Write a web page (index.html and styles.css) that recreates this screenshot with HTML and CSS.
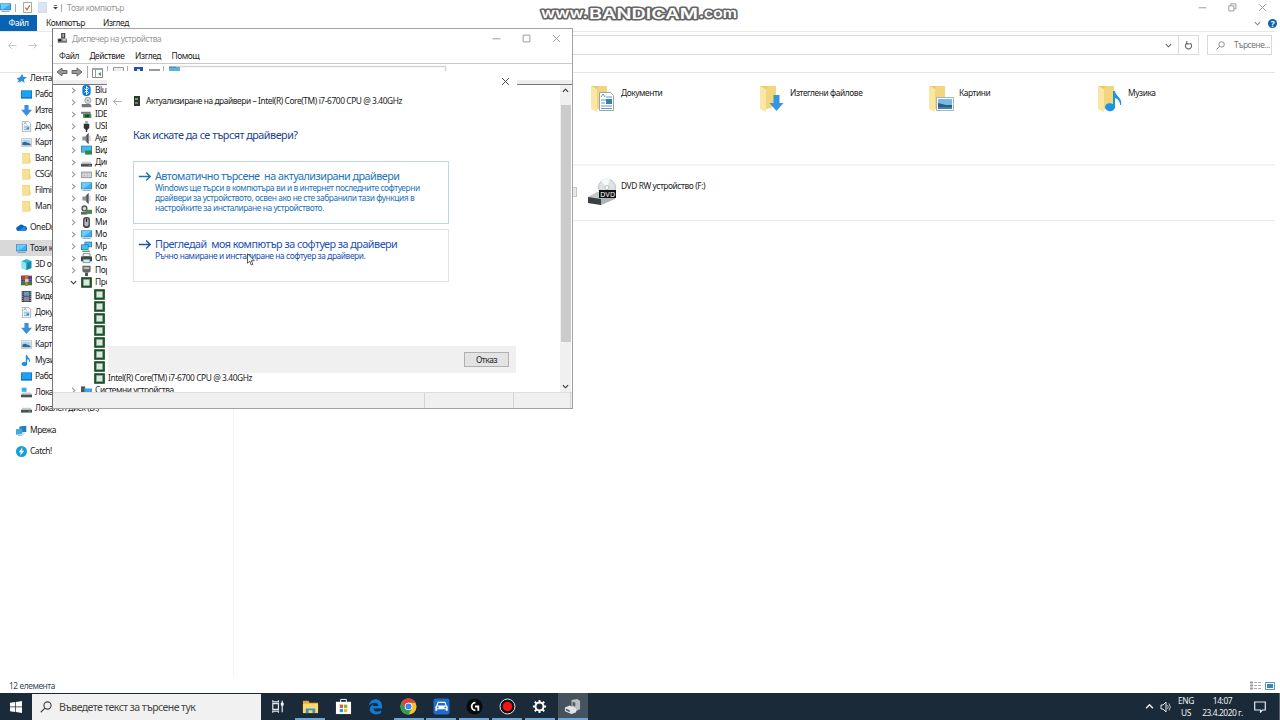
FILE: index.html
```html
<!DOCTYPE html>
<html lang="bg">
<head>
    <meta charset="UTF-8">
    <meta name="viewport" content="width=device-width, initial-scale=1.0">
    <title>Този компютър</title>
    <link rel="stylesheet" href="styles.css">
</head>
<body>

    <svg class="sprite" width="0" height="0">
        <symbol id="pc" viewBox="0 0 16 16"><path d="M0 2h16v10H0z" fill="#2b7fb8"/><path d="M1 3h14v8H1z" fill="#36b0f2"/><path d="M1 3h14L4 11H1z" fill="#6ccbfa"/><path d="M2 13h12v1H2z" fill="#6b7f8c"/></symbol>
        <symbol id="desk" viewBox="0 0 16 16"><path d="M0 2h16v12H0z" fill="#0a6fc2"/><path d="M1 3h14v9H1z" fill="#1ba1f5"/></symbol>
        <symbol id="star" viewBox="0 0 16 16"><path d="M9 1l1.500 4.500L16 6l-4.400 3.500L12.500 14 8.500 11.500 5 14l0-2-4 3 3-4.500L1 7.500 6 6z" fill="#2b8ddb"/></symbol>
        <symbol id="down" viewBox="0 0 16 16"><path d="M5 0h6v7h5l-8 9-8-9h5z" fill="#3b8ede"/></symbol>
        <symbol id="doc" viewBox="0 0 16 16"><path d="M2 .5h9l3 3v12H2z" fill="#fff" stroke="#8b9299"/><path d="M4 5l2-3 2 3M4 7.500h8M4 10h3M4 12.500h8" stroke="#3d8cc4" fill="none"/><path d="M8 9h4v3H8z" fill="#2a8fc0"/></symbol>
        <symbol id="pic" viewBox="0 0 16 16"><path d="M.5 2.500h15v11H.5z" fill="#fff" stroke="#9aa5ad"/><path d="M2 4h12v8H2z" fill="#a8d4ef"/><path d="M2 8l4-1 8 3v2H2z" fill="#34668c"/></symbol>
        <symbol id="folder" viewBox="0 0 16 16"><path d="M2 0h11v15H2z" fill="#edcf72"/><path d="M2 1h10v14H2z" fill="#f9e097"/><path d="M12 8h2v7H2v-1h10z" fill="#f1d379"/></symbol>
        <symbol id="cloud" viewBox="0 0 16 16"><path d="M4 13a3.500 3.500 0 0 1-.5-7A5 5 0 0 1 12 6a3.500 3.500 0 0 1 1 7z" fill="#0b64bd"/><path d="M4 13l7-6a3.400 3.400 0 0 1 2 6z" fill="#1d8be0"/></symbol>
        <symbol id="cube" viewBox="0 0 16 16"><path d="M8 0l7 3v10l-7 3-7-3V3z" fill="#29b5cf"/><path d="M1 3l7 3v10l-7-3z" fill="#91e2ee"/><path d="M8 6l7-3v10l-7 3z" fill="#168ba8"/></symbol>
        <symbol id="rar" viewBox="0 0 16 16"><path d="M0 1h16v5H0z" fill="#7d2f83"/><path d="M0 6h16v4H0z" fill="#3451a4"/><path d="M0 10h16v5H0z" fill="#377c3e"/><path d="M1 1h5v5H1z" fill="#c23a3a"/><path d="M6 0h4v16H6z" fill="#c47c32"/><path d="M6 6h5v4H6z" fill="#e8d9a0"/></symbol>
        <symbol id="film" viewBox="0 0 16 16"><path d="M1 0h14v16H1z" fill="#343b45"/><path d="M4 1h8v6H4z" fill="#6799cb"/><path d="M4 8h8v7H4z" fill="#8a8794"/><path d="M2.500 1v14M13.500 1v14" stroke="#eee" stroke-dasharray="1.500 1.500"/></symbol>
        <symbol id="note" viewBox="0 0 16 16"><path d="M7 0h2c0 4 5 4 4 10h-1c0-3-1-3.500-3-4v7a4 3 0 1 1-2-2.500z" fill="#1d8fe0"/></symbol>
        <symbol id="disk" viewBox="0 0 16 16"><path d="M2 7h12l2 4H0z" fill="#c9cdd1"/><path d="M0 10h16v4H0z" fill="#4c5155"/><path d="M11 12h3" stroke="#7ed36b"/></symbol>
        <symbol id="osdisk" viewBox="0 0 16 16"><path d="M1 1h7v6H1z" fill="#35aee9"/><path d="M2 8h12l2 3H0z" fill="#c9cdd1"/><path d="M0 11h16v4H0z" fill="#4c5155"/></symbol>
        <symbol id="net" viewBox="0 0 16 16"><path d="M5 2l10-1v9L5 11z" fill="#2b7cb0"/><path d="M0 6l9-1v8l-9 1z" fill="#43a7df"/><path d="M3 15h6l3-3" stroke="#5a8db0" fill="none"/></symbol>
        <symbol id="monitors" viewBox="0 0 16 16"><path d="M5 1h11v8H5z" fill="#1f77a8"/><path d="M6 2h9v6H6z" fill="#4dbcf0"/><path d="M0 5h11v8H0z" fill="#1f77a8"/><path d="M1 6h9v6H1z" fill="#4dbcf0"/><path d="M2 14h11v2H2z" fill="#3da558"/></symbol>
        <symbol id="bolt" viewBox="0 0 16 16"><circle cx="8" cy="8" r="8" fill="#149fda"/><path d="M9 2L4 9h3l-1 5 6-7H9z" fill="#fff"/></symbol>
        <symbol id="bt" viewBox="0 0 16 16"><rect x="2" width="12" height="16" rx="5" fill="#0a7be0"/><path d="M5 5l6 6-3 3V2l3 3-6 6" stroke="#fff" fill="none" stroke-width="1.300"/></symbol>
        <symbol id="optic" viewBox="0 0 16 16"><circle cx="10" cy="5" r="4.500" fill="#d7dadc" stroke="#888"/><circle cx="10" cy="5" r="1" fill="#666"/><path d="M1 10h12l2 2v3H1z" fill="#777"/></symbol>
        <symbol id="card" viewBox="0 0 16 16"><path d="M0 4h14v3H0z" fill="#777"/><path d="M3 7h12v6H3z" fill="#3f8f4d"/><path d="M6 8h6v4H6z" fill="#27452c"/></symbol>
        <symbol id="usb" viewBox="0 0 16 16"><path d="M6 0h4v4H6z" fill="#aaa"/><path d="M4 4h8v6l-3 3v3H7v-3l-3-3z" fill="#333"/></symbol>
        <symbol id="snd" viewBox="0 0 16 16"><path d="M2 5h4l5-5v16l-5-5H2z" fill="#8d9297"/><path d="M8 3l3-3v16l-3-3z" fill="#555"/><path d="M13 4v8" stroke="#999"/></symbol>
        <symbol id="gpu" viewBox="0 0 16 16"><path d="M0 1h16v10H0z" fill="#207daf"/><path d="M1 2h14v8H1z" fill="#49b6ee"/><path d="M6 8h10v6H6z" fill="#37844a"/></symbol>
        <symbol id="kbd" viewBox="0 0 16 16"><path d="M.5 4.500h15v8H.5z" fill="#e6e8ea" stroke="#656a70"/><path d="M2 7h12M2 10h12" stroke="#777" stroke-dasharray="1.500 .8"/></symbol>
        <symbol id="ctl" viewBox="0 0 16 16"><circle cx="5" cy="5" r="3.500" fill="#ddd" stroke="#555" stroke-width="2"/><path d="M0 10h9v4H0z" fill="#666"/><path d="M7 7h9v6H7z" fill="#48884f"/></symbol>
        <symbol id="mouse" viewBox="0 0 16 16"><rect x="3" y="0" width="10" height="16" rx="4" fill="#45484c"/><rect x="5" y="1.500" width="6" height="12" rx="3" fill="#b5b9bd"/><path d="M8 2v5" stroke="#222" stroke-width="2"/></symbol>
        <symbol id="print" viewBox="0 0 16 16"><path d="M3 1h10v4H3z" fill="#fff" stroke="#555"/><path d="M0 5h16v7H0z" fill="#444"/><path d="M3 9h10v5H3z" fill="#cfeaec" stroke="#38818b"/></symbol>
        <symbol id="port" viewBox="0 0 16 16"><path d="M2 1h12v8l-2 2H4L2 9z" fill="#666"/><path d="M4 3h8v3H4z" fill="#bbb"/><path d="M6 11h4v5H6z" fill="#444"/></symbol>
        <symbol id="cpu" viewBox="0 0 16 16"><path d="M1 1h14v14H1z" fill="#5d9b6c"/><path d="M1.500 1.500h13v13h-13z" fill="none" stroke="#1f4c2e" stroke-width="2.600"/><path d="M4 4h8v8H4z" fill="#dfe6e1"/></symbol>
        <symbol id="sys" viewBox="0 0 16 16"><path d="M0 2h6v12H0z" fill="#50565b"/><path d="M5 5h11v9H5z" fill="#3da5df"/></symbol>
        <symbol id="devmgr" viewBox="0 0 16 16"><path d="M6 0h6v8H6z" fill="#444"/><path d="M8 1h2v5H8z" fill="#bbb"/><path d="M1 8h13l1 6H1z" fill="#777"/><path d="M2 9h4v3H2z" fill="#222"/><path d="M8 10h5" stroke="#ddd" stroke-width="2"/></symbol>
        <symbol id="arrow" viewBox="0 0 16 16"><path d="M1 8h14M10 3l5 5-5 5" fill="none" stroke="currentColor" stroke-width="1.700"/></symbol>
        <symbol id="arrow-l" viewBox="0 0 16 16"><path d="M15 8H1M7 2L1 8l6 6" fill="none" stroke="currentColor" stroke-width="1.700"/></symbol>
        <symbol id="chev" viewBox="0 0 16 16"><path d="M2 5l6 6 6-6" fill="none" stroke="currentColor" stroke-width="2.600"/></symbol>
        <symbol id="min" viewBox="0 0 16 16"><path d="M1 8.500h14" stroke="currentColor" stroke-width="1.700"/></symbol>
        <symbol id="max" viewBox="0 0 16 16"><path d="M2 2h12v12H2z" fill="none" stroke="currentColor" stroke-width="1.700"/></symbol>
        <symbol id="restore" viewBox="0 0 16 16"><path d="M1.500 5h9v9h-9zM5 5V1.500h9v9h-3" fill="none" stroke="currentColor" stroke-width="1.700"/></symbol>
        <symbol id="close" viewBox="0 0 16 16"><path d="M2 2l12 12M14 2L2 14" stroke="currentColor" stroke-width="1.600"/></symbol>
        <symbol id="search" viewBox="0 0 16 16"><circle cx="10" cy="6" r="4.800" fill="none" stroke="currentColor" stroke-width="1.500"/><path d="M6.500 9.500L1 15" stroke="currentColor" stroke-width="1.500"/></symbol>
        <symbol id="bigfolder" viewBox="0 0 18 28"><path d="M5 1h12v20L5 25z" fill="#f3d67b"/><path d="M1 1l6 3v23l-6-3z" fill="#fae6a5"/><path d="M1 1h7l-1 3z" fill="#e9c867"/></symbol>
    </svg>

    <div class="explorer">
        <div class="ex-title">
            <svg class="i11"><use href="#pc"/></svg>
            <span class="bar"></span>
            <svg class="qa" viewBox="0 0 10 12"><path d="M.5.500h9v11h-9z" fill="#fff" stroke="#999"/><path d="M2.500 6l2 2.500 3-5" stroke="#d2542b" fill="none" stroke-width="1.300"/></svg>
            <svg class="qa" viewBox="0 0 10 12"><path d="M.5.500h9v11h-9z" fill="#d9e5f3" stroke="#cfdae6"/></svg>
            <svg class="tiny" viewBox="0 0 6 6"><path d="M1 .5h4" stroke="#444"/><path d="M0 2.500h6l-3 3z" fill="#444"/></svg>
            <span class="bar"></span>
            <span class="ex-name">Този компютър</span>
            <div class="controls">
                <svg class="i9"><use href="#min"/></svg>
                <svg class="i9"><use href="#restore"/></svg>
                <svg class="i9"><use href="#close"/></svg>
            </div>
        </div>
        <div class="ex-tabs">
            <span class="tab file">Файл</span>
            <span class="tab t2">Компютър</span>
            <span class="tab t3">Изглед</span>
            <div class="tab-right">
                <svg class="i7"><use href="#chev"/></svg>
                <span class="help">?</span>
            </div>
        </div>
        <div class="ex-address">
            <div class="nav-btns">
                <svg class="i9"><use href="#arrow-l"/></svg>
                <svg class="i9"><use href="#arrow"/></svg>
                <svg class="i5"><use href="#chev"/></svg>
            </div>
            <div class="address-box">
                <svg class="i7"><use href="#chev"/></svg>
                <span class="refresh"><svg class="i9" viewBox="0 0 16 16"><path d="M5 4a5.500 5.500 0 1 0 6 0M5 0v5h5" fill="none" stroke="#666" stroke-width="2"/></svg></span>
            </div>
            <div class="search-box"><svg class="i9"><use href="#search"/></svg><span>Търсене...</span></div>
        </div>
        <div class="ex-body">
            <div class="sidebar">
                <div class="nav"><svg class="i11"><use href="#star"/></svg>Лента за бърз</div>
                <div class="nav sub"><svg class="i11"><use href="#desk"/></svg>Работен плот</div>
                <div class="nav sub"><svg class="i11"><use href="#down"/></svg>Изтеглени</div>
                <div class="nav sub"><svg class="i11"><use href="#doc"/></svg>Документи</div>
                <div class="nav sub"><svg class="i11"><use href="#pic"/></svg>Картини</div>
                <div class="nav sub"><svg class="i11"><use href="#folder"/></svg>Bandicam</div>
                <div class="nav sub"><svg class="i11"><use href="#folder"/></svg>CSGO</div>
                <div class="nav sub"><svg class="i11"><use href="#folder"/></svg>Filmi</div>
                <div class="nav sub"><svg class="i11"><use href="#folder"/></svg>Mania</div>
                <div class="nav gap"><svg class="i11"><use href="#cloud"/></svg>OneDrive</div>
                <div class="nav gap selected"><svg class="i11"><use href="#pc"/></svg>Този компютър</div>
                <div class="nav sub"><svg class="i11"><use href="#cube"/></svg>3D обекти</div>
                <div class="nav sub"><svg class="i11"><use href="#rar"/></svg>CSGO</div>
                <div class="nav sub"><svg class="i11"><use href="#film"/></svg>Видеоклипове</div>
                <div class="nav sub"><svg class="i11"><use href="#doc"/></svg>Документи</div>
                <div class="nav sub"><svg class="i11"><use href="#down"/></svg>Изтеглени</div>
                <div class="nav sub"><svg class="i11"><use href="#pic"/></svg>Картини</div>
                <div class="nav sub"><svg class="i11"><use href="#note"/></svg>Музика</div>
                <div class="nav sub"><svg class="i11"><use href="#desk"/></svg>Работен плот</div>
                <div class="nav sub"><svg class="i11"><use href="#osdisk"/></svg>Локален диск</div>
                <div class="nav sub"><svg class="i11"><use href="#disk"/></svg>Локален диск (D:)</div>
                <div class="nav gap"><svg class="i11"><use href="#net"/></svg>Мрежа</div>
                <div class="nav gap"><svg class="i11"><use href="#bolt"/></svg>Catch!</div>
            </div>
            <div class="main">
                <div class="tiles folders">
                    <div class="tile first">
                        <svg class="tile-icon" viewBox="0 0 28 28"><use href="#bigfolder" width="18" height="28"/><path d="M9.500 7.500h11l3 3v15h-14z" fill="#fff" stroke="#9ba5ad"/><path d="M11 12l2-3 2 3M16 12h6M11 15h5M11 18h4M11 21h11M11 23.500h11" stroke="#5b9dcc" fill="none"/><path d="M16 14h6v5h-6z" fill="#3a80ad"/></svg>
                        <span>Документи</span>
                    </div>
                    <div class="tile">
                        <svg class="tile-icon" viewBox="0 0 28 28"><use href="#bigfolder" width="18" height="28"/><path d="M14.500 10h6v8h4l-7 8-7-8h4z" fill="#3595e4"/></svg>
                        <span>Изтеглени файлове</span>
                    </div>
                    <div class="tile">
                        <svg class="tile-icon" viewBox="0 0 28 28"><use href="#bigfolder" width="18" height="28"/><path d="M8.500 12.500h17v13h-17z" fill="#fff" stroke="#a5b3bd"/><path d="M10 14h14v10H10z" fill="#77b8ed"/><path d="M10 18l4 1 4 1h6v4H10z" fill="#315f72"/><path d="M10 22h14v2H10z" fill="#3b82b4"/></svg>
                        <span>Картини</span>
                    </div>
                    <div class="tile">
                        <svg class="tile-icon" viewBox="0 0 28 28"><use href="#bigfolder" width="18" height="28"/><path d="M16 6h2c0 5 8 7 6 14h-1c0-4-2-6-5-7v9a5 4 0 1 1-2-3z" fill="#1b94e6"/></svg>
                        <span>Музика</span>
                    </div>
                </div>
                <div class="tiles drives">
                    <div class="drive"><div class="usage"></div></div>
                    <div class="tile">
                        <svg class="tile-icon dvd" viewBox="0 0 30 28"><path d="M1 19l9-5h18v6l-14 7-13-2z" fill="#c4c7ca"/><path d="M1 19l13 2v6l-13-2z" fill="#3b3f43"/><path d="M14 21l14-4v4l-14 6z" fill="#aeb2b6"/><circle cx="20" cy="9.500" r="8.500" fill="#dde2e5" stroke="#b9bfc3"/><path d="M20 9.500L14 3a9 9 0 0 1 9-2z" fill="#f7f9fa"/><circle cx="20" cy="9.500" r="2" fill="#fff" stroke="#b5b9bd"/><path d="M12 12h17v8H12z" fill="#111"/><text x="13.200" y="18.700" font-size="7" fill="#fff" textLength="14.500">DVD</text></svg>
                        <span>DVD RW устройство (F:)</span>
                    </div>
                </div>
            </div>
        </div>
        <div class="ex-status">
            <span>12 елемента</span>
            <div class="views">
                <svg width="11" height="9" viewBox="0 0 11 9"><path d="M0 1.500h3M0 4.500h3M0 7.500h3" stroke="#999" stroke-width="2"/><path d="M4 1.500h3M8 1.500h3M4 4.500h3M8 4.500h3M4 7.500h3M8 7.500h3" stroke="#aaa"/></svg>
                <svg width="10" height="8" viewBox="0 0 10 8"><path d="M.5.500h9v7h-9z" fill="#fff" stroke="#4e9ac2"/><path d="M2 2h6v4H2z" fill="#3f83ae"/></svg>
            </div>
        </div>
    </div>

    <div class="devmgr">
        <div class="dm-title">
            <svg class="i11"><use href="#devmgr"/></svg>
            <span>Диспечер на устройства</span>
            <div class="controls">
                <svg class="i9"><use href="#min"/></svg>
                <svg class="i9"><use href="#max"/></svg>
                <svg class="i9"><use href="#close"/></svg>
            </div>
        </div>
        <div class="dm-menu">
            <span>Файл</span><span>Действие</span><span>Изглед</span><span>Помощ</span>
        </div>
        <div class="dm-toolbar">
            <svg width="398" height="19" viewBox="0 0 398 19">
                <path d="M3 8l5-4v2.500h5v3H8V12z" fill="#999" stroke="#666"/>
                <path d="M28 8l-5-4v2.500h-5v3h5V12z" fill="#999" stroke="#666"/>
                <path d="M33.500 2v12M53.500 2v12M73.500 2v5M109.500 2v5" stroke="#aaa"/>
                <path d="M38.500 4.500h10v9h-10z" fill="#fff" stroke="#888"/><path d="M38 4h11v2H38z" fill="#9aa7b0"/><path d="M41.500 6v7" stroke="#999"/><path d="M47 8v4l-3-2z" fill="#3fa34d"/>
                <path d="M59.500 3.500h10v5h-10z" fill="#eee" stroke="#999"/>
                <path d="M80 3h9v5h-9z" fill="#2450ab"/><path d="M83 5h3v3h-3z" fill="#dce5fa"/>
                <path d="M95 5h11v2H95z" fill="#999"/>
                <path d="M115 3h11v5h-11z" fill="#5bb2e4"/><path d="M115 3h11" stroke="#33789f"/>
                <path d="M122 2.500H391.500v5" stroke="#d4d4d4" stroke-width="1.500" fill="none"/>
            </svg>
        </div>
        <div class="dm-content">
            <div class="tree">
                <div class="dev"><svg class="i7"><use href="#chev"/></svg><svg class="i11"><use href="#bt"/></svg>Blu</div>
                <div class="dev"><svg class="i7"><use href="#chev"/></svg><svg class="i11"><use href="#optic"/></svg>DVD</div>
                <div class="dev"><svg class="i7"><use href="#chev"/></svg><svg class="i11"><use href="#card"/></svg>IDE</div>
                <div class="dev"><svg class="i7"><use href="#chev"/></svg><svg class="i11"><use href="#usb"/></svg>USB</div>
                <div class="dev"><svg class="i7"><use href="#chev"/></svg><svg class="i11"><use href="#snd"/></svg>Ауд</div>
                <div class="dev"><svg class="i7"><use href="#chev"/></svg><svg class="i11"><use href="#gpu"/></svg>Вид</div>
                <div class="dev"><svg class="i7"><use href="#chev"/></svg><svg class="i11"><use href="#disk"/></svg>Диск</div>
                <div class="dev"><svg class="i7"><use href="#chev"/></svg><svg class="i11"><use href="#kbd"/></svg>Клав</div>
                <div class="dev"><svg class="i7"><use href="#chev"/></svg><svg class="i11"><use href="#pc"/></svg>Комп</div>
                <div class="dev"><svg class="i7"><use href="#chev"/></svg><svg class="i11"><use href="#snd"/></svg>Конт</div>
                <div class="dev"><svg class="i7"><use href="#chev"/></svg><svg class="i11"><use href="#ctl"/></svg>Конт</div>
                <div class="dev"><svg class="i7"><use href="#chev"/></svg><svg class="i11"><use href="#mouse"/></svg>Миш</div>
                <div class="dev"><svg class="i7"><use href="#chev"/></svg><svg class="i11"><use href="#pc"/></svg>Мон</div>
                <div class="dev"><svg class="i7"><use href="#chev"/></svg><svg class="i11"><use href="#monitors"/></svg>Мре</div>
                <div class="dev"><svg class="i7"><use href="#chev"/></svg><svg class="i11"><use href="#print"/></svg>Опа</div>
                <div class="dev"><svg class="i7"><use href="#chev"/></svg><svg class="i11"><use href="#port"/></svg>Пор</div>
                <div class="dev open"><svg class="i7"><use href="#chev"/></svg><svg class="i11"><use href="#cpu"/></svg>Про</div>
                <div class="dev child"><svg class="i11"><use href="#cpu"/></svg></div>
                <div class="dev child"><svg class="i11"><use href="#cpu"/></svg></div>
                <div class="dev child"><svg class="i11"><use href="#cpu"/></svg></div>
                <div class="dev child"><svg class="i11"><use href="#cpu"/></svg></div>
                <div class="dev child"><svg class="i11"><use href="#cpu"/></svg></div>
                <div class="dev child"><svg class="i11"><use href="#cpu"/></svg></div>
                <div class="dev child"><svg class="i11"><use href="#cpu"/></svg></div>
                <div class="dev child"><svg class="i11"><use href="#cpu"/></svg>Intel(R) Core(TM) i7-6700 CPU @ 3.40GHz</div>
                <div class="dev"><svg class="i7"><use href="#chev"/></svg><svg class="i11"><use href="#sys"/></svg>Системни устройства</div>
            </div>
            <div class="scrollbar">
                <svg class="i7 up"><use href="#chev"/></svg>
                <div class="thumb"></div>
                <svg class="i7"><use href="#chev"/></svg>
            </div>
        </div>
        <div class="dm-status"><span class="s1"></span><span class="s2"></span><span class="s3"></span></div>

        <div class="dialog">
            <div class="dl-close"><svg class="i9"><use href="#close"/></svg></div>
            <div class="dl-head">
                <svg class="i9 back"><use href="#arrow-l"/></svg>
                <svg class="chip" viewBox="0 0 6 10"><path d="M0 0h6v10H0z" fill="#333"/><path d="M1 2h3v2H1z" fill="#5ca867"/><path d="M1 6h3v2H1z" fill="#777"/></svg>
                <span>Актуализиране на драйвери – Intel(R) Core(TM) i7-6700 CPU @ 3.40GHz</span>
            </div>
            <h1 class="question">Как искате да се търсят драйвери?</h1>
            <div class="option hot">
                <svg class="opt-arrow"><use href="#arrow"/></svg>
                <div>
                    <div class="opt-title">Автоматично търсене&nbsp; на актуализирани драйвери</div>
                    <div class="opt-text">Windows ще търси в компютъра ви и в интернет последните софтуерни<br>драйвери за устройството, освен ако не сте забранили тази функция в<br>настройките за инсталиране на устройството.</div>
                </div>
            </div>
            <div class="option">
                <svg class="opt-arrow"><use href="#arrow"/></svg>
                <div>
                    <div class="opt-title">Прегледай&nbsp; моя компютър за софтуер за драйвери</div>
                    <div class="opt-text">Ръчно намиране и инсталиране на софтуер за драйвери.</div>
                </div>
            </div>
            <div class="dl-footer"><button class="cancel">Отказ</button></div>
        </div>
    </div>

    <div class="taskbar">
        <div class="start"><svg width="12" height="12" viewBox="0 0 12 12"><path d="M0 1.700L5.300 1v4.600H0zM6 .9L12 0v5.600H6zM0 6.300h5.300V11L0 10.300zM6 6.300h6V12l-6-.9z" fill="#fff"/></svg></div>
        <div class="tb-search"><svg width="12" height="12"><use href="#search"/></svg><span>Въведете текст за търсене тук</span></div>
        <div class="apps">
            <div class="app"><svg viewBox="0 0 18 18"><path d="M4 6h6v6H4zM4 2.500v1.500h6V2.500M4 15.500V14h6v1.500M14 3v12" fill="none" stroke="#dfe4e8" stroke-width="1.300"/><path d="M12.500 5h3v3h-3z" fill="#fff"/></svg></div>
            <div class="app run"><svg viewBox="0 0 18 18"><path d="M1 3h6l1 2h9v11H1z" fill="#e3a93b"/><path d="M1 6h16v10H1z" fill="#fbd96c"/><path d="M4 16v-5h10v5h-3v-3H7v3z" fill="#3f93cd"/></svg></div>
            <div class="app"><svg viewBox="0 0 18 18"><path d="M6 5V1.500h6V5" fill="none" stroke="#fff"/><path d="M1 4h16v13H1z" fill="#fff"/><path d="M5 7h3.500v3.500H5z" fill="#e9512e"/><path d="M9.500 7H13v3.500H9.500z" fill="#7fb924"/><path d="M5 11.500h3.500V15H5z" fill="#199fe0"/><path d="M9.500 11.500H13V15H9.500z" fill="#f7b71d"/></svg></div>
            <div class="app"><svg viewBox="0 0 18 18"><path d="M2 8c1-9 14-9 14 1v2H7c0 4 5 4 8 2v3c-5 3-13 1-12-5 .5-3 3-4 4-4.500C6.500 7 6.500 8 6.500 8.500H12c0-5-7-4-10-.5z" fill="#0f7bd5"/></svg></div>
            <div class="app run"><svg viewBox="0 0 18 18"><circle cx="9" cy="9" r="8.500" fill="#f4c32e"/><path d="M1.600 4.800A8.500 8.500 0 0 1 16.500 5H9L5 11z" fill="#dc4437"/><path d="M1.600 4.800A8.500 8.500 0 0 0 9 17.500l3.500-6L5.500 11z" fill="#2f9e55"/><circle cx="9" cy="9" r="4" fill="#fff"/><circle cx="9" cy="9" r="3.200" fill="#4384f0"/></svg></div>
            <div class="app run"><svg viewBox="0 0 18 18"><rect x=".5" y=".5" width="17" height="17" rx="2.500" fill="#1d6cd0"/><path d="M5 4h8l1.500 4 1 1v4.500h-2V12h-9v1.500h-2V9l1-1z" fill="#fff"/><path d="M5.700 5.300h6.600l.9 2.700H4.800z" fill="#1d6cd0"/><circle cx="5" cy="10" r=".9" fill="#1d6cd0"/><circle cx="13" cy="10" r=".9" fill="#1d6cd0"/></svg></div>
            <div class="app run"><svg viewBox="0 0 18 18"><circle cx="9" cy="9" r="8.500" fill="#080b0d"/><path d="M10 5a4 4 0 1 0 0 8M9.500 9H13v4.500" fill="none" stroke="#fff" stroke-width="1.900"/></svg></div>
            <div class="app run"><svg viewBox="0 0 18 18"><circle cx="9" cy="9" r="7.900" fill="#111" stroke="#eee"/><circle cx="9" cy="9" r="5" fill="#f01616"/></svg></div>
            <div class="app run"><svg viewBox="0 0 18 18"><circle cx="9" cy="9" r="4.200" fill="none" stroke="#fff" stroke-width="2"/><path d="M9 2v2.500M9 13.500V16M2 9h2.500M13.500 9H16M4 4l2 2M12 12l2 2M14 4l-2 2M6 12l-2 2" stroke="#fff" stroke-width="2"/></svg></div>
            <div class="app run active"><svg viewBox="0 0 18 18"><path d="M8 2l6-1 3 2v9l-5 2-4-2z" fill="#b9bec2"/><path d="M9 4l3 1v4L9 8z" fill="#555b60"/><path d="M1 10l5-2 7 3v4l-5 2-7-3z" fill="#e1e4e6"/><path d="M2 11l4 2v2l-4-2z" fill="#555b60"/></svg></div>
        </div>
        <div class="tray">
            <svg class="i9 up"><use href="#chev"/></svg>
            <svg class="vol" viewBox="0 0 12 12"><path d="M1 4h2l3-3v10L3 8H1z" fill="none" stroke="#e5e8ea"/><path d="M7.500 4q1.500 2 0 4M9 2.500q2.800 3.500 0 7" fill="none" stroke="#b6bdc3"/></svg>
            <div class="lang">ENG<br>US</div>
            <div class="clock">14:07<br>23.4.2020 г.</div>
            <svg class="bell" viewBox="0 0 12 12"><path d="M.7 1h10.600v8H8.500L6.500 11V9H.7z" fill="none" stroke="#e5e8ea" stroke-width="1.200"/></svg>
        </div>
    </div>

    <svg class="watermark" viewBox="0 0 210 24">
        <text x="6" y="17" textLength="47" lengthAdjust="spacingAndGlyphs">www.</text>
        <text class="big" x="54" y="17.500" textLength="109" lengthAdjust="spacingAndGlyphs">BANDICAM</text>
        <text x="164" y="17" textLength="38" lengthAdjust="spacingAndGlyphs">.com</text>
    </svg>

    <svg class="cursor" viewBox="0 0 8 13"><path d="M.5.700v9.500l2.200-2 1.500 3.800 1.700-.7-1.600-3.600h3z" fill="#fff" stroke="#333" stroke-width=".8"/></svg>

</body>
</html>
```

FILE: styles.css
```css
* {
    box-sizing: border-box;
}
body {
    font-family: "Noto Sans", "Open Sans", sans-serif;
    font-size: 8.4px;
    line-height: 10px;
    letter-spacing: -0.42px;
    margin: 0;
    padding: 0;
    width: 1280px;
    height: 720px;
    overflow: hidden;
    position: relative;
    display: flex;
    flex-direction: column;
    background: white;
    color: #222;
    white-space: nowrap;
}
svg {
    display: block;
    flex-shrink: 0;
}
.sprite {
    position: absolute;
}
.i11 { width: 11px; height: 11px; }
.i9 { width: 9px; height: 9px; }
.i7 { width: 7px; height: 7px; }
.i5 { width: 5px; height: 5px; }
.up {
    transform: rotate(180deg);
}
.controls {
    margin-left: auto;
    display: flex;
    gap: 21px;
    color: #999;
}

/* explorer window */
.explorer {
    flex: 1;
    display: flex;
    flex-direction: column;
}
.ex-title {
    height: 15px;
    display: flex;
    align-items: center;
    padding-right: 13px;
}
.bar {
    width: 1px;
    height: 8px;
    background: #aaa;
    margin: 0 7px 0 4px;
}
.qa {
    width: 9px;
    height: 11px;
    margin-right: 6px;
}
.tiny {
    width: 5px;
    height: 5px;
    margin-right: -1px;
}
.tiny + .bar {
    margin-right: 5px;
}
.ex-name {
    color: #999;
}
.ex-tabs {
    height: 16px;
    display: flex;
    align-items: center;
}
.tab.file {
    width: 37px;
    height: 16px;
    line-height: 16px;
    text-align: center;
    background: #0a63b1;
    color: white;
}
.tab.t2 {
    width: 57px;
    padding-left: 9px;
}
.tab.t3 {
    padding-left: 9px;
}
.tab-right {
    margin-left: auto;
    display: flex;
    align-items: center;
    gap: 7px;
    padding-right: 3px;
    color: #888;
}
.help {
    width: 9px;
    height: 9px;
    line-height: 9px;
    border-radius: 50%;
    background: #0a63b1;
    color: white;
    text-align: center;
    font-weight: bold;
}
.ex-address {
    height: 42px;
    margin: 0 5px 0 0;
    padding-top: 3px;
    border-top: 1px solid #e8e8e8;
    border-bottom: 1px solid #e3e3e3;
    display: flex;
    align-items: flex-start;
}
.nav-btns {
    width: 60px;
    height: 20px;
    padding-left: 8px;
    display: flex;
    align-items: center;
    gap: 11px;
    color: #c4c4c4;
}
.address-box {
    width: 1139px;
    height: 20px;
    border: 1px solid #d9d9d9;
    display: flex;
    align-items: center;
    justify-content: flex-end;
    gap: 6px;
    color: #666;
}
.refresh {
    width: 20px;
    height: 18px;
    border-left: 1px solid #d9d9d9;
    display: flex;
    align-items: center;
    justify-content: center;
}
.search-box {
    width: 65px;
    height: 20px;
    margin-left: 8px;
    padding-left: 8px;
    border: 1px solid #d9d9d9;
    display: flex;
    align-items: center;
    gap: 9px;
    color: #777;
}
.ex-body {
    flex: 1;
    display: flex;
}
.sidebar {
    width: 234px;
    height: 607px;
    margin-top: -3px;
    border-right: 1px solid #f4f4f4;
}
.nav {
    height: 16px;
    padding-left: 16px;
    display: flex;
    align-items: center;
    gap: 3px;
}
.nav.sub {
    padding-left: 21px;
}
.nav.gap {
    margin-top: 5px;
}
.nav.sub + .nav.gap:nth-last-child(2) {
    margin-top: 6px;
}
.nav.selected {
    background: #d9d9d9;
}
.main {
    flex: 1;
}
.tiles {
    display: grid;
    grid-template-columns: repeat(6, 169px);
    padding-left: 18px;
    margin-right: 5px;
}
.folders {
    height: 93px;
    padding-top: 12px;
    border-bottom: 2px solid #f3f3f3;
}
.drives {
    height: 55px;
    padding-top: 12px;
    border-bottom: 1px solid #e9e9e9;
}
.tile {
    display: flex;
    gap: 3px;
}
.tile span {
    padding-top: 3px;
}
.tile.first {
    grid-column: 3;
}
.tile-icon {
    width: 28px;
    height: 28px;
}
.tile-icon.dvd {
    width: 30px;
    margin-left: -3px;
    margin-right: 1px;
}
.drive {
    grid-column: 2;
    padding: 9px 0 0 31px;
}
.usage {
    width: 125px;
    height: 10px;
    border: 1px solid #c6c6c6;
    background: #e8e8e8;
}
.ex-status {
    height: 15px;
    padding: 0 5px 0 9px;
    display: flex;
    align-items: center;
    justify-content: space-between;
    color: #3a4657;
}
.views {
    display: flex;
    align-items: center;
    gap: 4px;
}

/* device manager window */
.devmgr {
    position: absolute;
    left: 52px;
    top: 28px;
    width: 521px;
    height: 381px;
    background: white;
    border: 1px solid #a2a2a2;
    border-left-color: #777;
    display: flex;
    flex-direction: column;
}
.dm-title {
    height: 19px;
    padding: 0 11px 0 4px;
    display: flex;
    align-items: center;
    gap: 4px;
    color: #999;
}
.dm-menu {
    height: 16px;
    padding-left: 6px;
    display: flex;
    align-items: center;
    gap: 10.5px;
    border-bottom: 1px solid #c9c9c9;
}
.dm-toolbar {
    height: 20px;
    padding-left: 1px;
    background: linear-gradient(white 16px, #eee 16px);
}
.dm-content {
    height: 308px;
    display: flex;
    border-top: 1px solid #777;
    overflow: hidden;
}
.tree {
    flex: 1;
    margin-top: -1px;
}
.dev {
    height: 12px;
    padding-left: 17px;
    display: flex;
    align-items: center;
    gap: 3.5px;
}
.dev .i7 {
    transform: rotate(-90deg);
    color: #999;
}
.dev.open .i7 {
    transform: none;
    color: #333;
}
.dev.child {
    padding-left: 40.5px;
}
.scrollbar {
    width: 11px;
    margin-right: 1px;
    padding: 2px 0 2px;
    background: #f0f0f0;
    display: flex;
    flex-direction: column;
    align-items: center;
    color: #333;
}
.thumb {
    width: 10px;
    height: 237px;
    margin: 11px 0 auto;
    background: #cbcbcb;
}
.dm-status {
    flex: 1;
    background: #f0f0f0;
    border-top: 1px solid #ddd;
    display: flex;
}
.dm-status span {
    border-right: 1px solid #d4d4d4;
}
.s1 { width: 372px; }
.s2 { width: 89px; }
.s3 { width: 57px; }

/* driver update dialog */
.dialog {
    position: absolute;
    left: 54px;
    top: 42px;
    width: 410px;
    height: 302px;
    background: white;
    display: flex;
    flex-direction: column;
}
.dl-close {
    height: 19px;
    padding: 6px 7px 0 0;
    display: flex;
    justify-content: flex-end;
    color: #333;
}
.dl-head {
    height: 22px;
    padding-left: 6px;
    display: flex;
    align-items: center;
}
.back {
    color: #aaa;
    margin-right: 12px;
}
.chip {
    width: 6px;
    height: 10px;
    margin-right: 6px;
}
.question {
    margin: 15px 0 19px 26px;
    font-size: 10.8px;
    line-height: 15px;
    letter-spacing: -0.5px;
    font-weight: normal;
    color: #1c3f8f;
}
.option {
    width: 316px;
    height: 53px;
    margin-left: 26px;
    padding: 7px 0 0 4px;
    border: 1px solid #dfe1e3;
    display: flex;
    gap: 4px;
    color: #1a50b8;
}
.option.hot {
    height: 63px;
    margin-bottom: 5px;
    border-color: #bfd6e2;
    color: #2373b8;
}
.opt-arrow {
    width: 13px;
    height: 13px;
    margin-top: 1px;
}
.opt-title {
    font-size: 10.8px;
    line-height: 14px;
    letter-spacing: -0.52px;
}
.opt-text {
    line-height: 10px;
}
.dl-footer {
    height: 27px;
    margin: auto 1px 0 1px;
    padding: 6px 7px 0 0;
    background: #f0f0f0;
    display: flex;
    justify-content: flex-end;
    align-items: flex-start;
}
.cancel {
    width: 45px;
    height: 15px;
    padding: 0;
    font: inherit;
    letter-spacing: inherit;
    background: #e3e3e3;
    border: 1px solid #b0b0b0;
    color: #222;
}

/* taskbar */
.taskbar {
    height: 27px;
    background: #1b2a39;
    display: flex;
    color: #eee;
}
.start {
    width: 32px;
    display: flex;
    align-items: center;
    justify-content: center;
}
.tb-search {
    width: 229px;
    margin-top: 1px;
    padding-left: 8px;
    background: #f1f1f1;
    display: flex;
    align-items: center;
    gap: 7px;
    font-size: 10.5px;
    letter-spacing: -0.55px;
    color: #444;
}
.apps {
    display: flex;
    padding-left: 1.5px;
}
.app {
    width: 30px;
    height: 27px;
    margin-right: 2.8px;
    display: flex;
    align-items: center;
    justify-content: center;
}
.app svg {
    width: 17px;
    height: 17px;
}
.app.run {
    border-bottom: 2px solid #6fa6d8;
    padding-top: 2px;
}
.app.active {
    background: #46525e;
}
.tray {
    margin-left: auto;
    padding-right: 1px;
    border-right: 1px solid #56616b;
    display: flex;
    align-items: center;
    text-align: center;
    line-height: 12px;
}
.vol {
    width: 12px;
    height: 12px;
    margin: 0 6px 0 6px;
}
.lang {
    width: 16px;
}
.clock {
    width: 43px;
    margin: 0 10px 0 7px;
}
.bell {
    width: 12px;
    height: 12px;
    margin-right: 12px;
}

/* things drawn over the windows */
.watermark {
    position: absolute;
    left: 535px;
    top: 1px;
    width: 210px;
    height: 24px;
    font-family: Inter, "Open Sans", sans-serif;
    font-size: 14px;
    font-weight: 600;
    letter-spacing: 0;
    fill: white;
    stroke: #666;
    stroke-width: 3px;
    stroke-linejoin: round;
    paint-order: stroke;
}
.cursor {
    position: absolute;
    left: 247px;
    top: 253px;
    width: 8px;
    height: 13px;
}
```
